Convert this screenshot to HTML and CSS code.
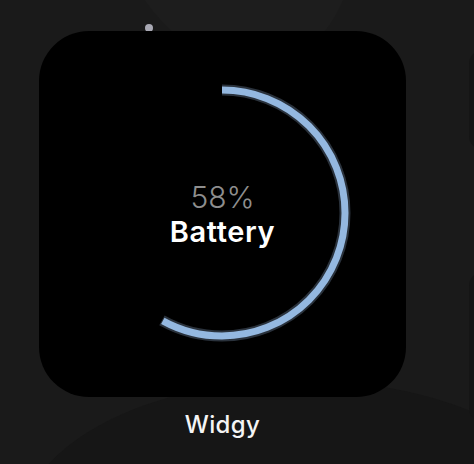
FILE: index.html
```html
<!DOCTYPE html>
<html>
<head>
<meta charset="utf-8">
<link rel="stylesheet" href="styles.css">
</head>
<body>
<div class="wall">
  <div class="blob blob-top"></div>
  <div class="blob blob-bottom"></div>
  <div class="edge edge-a"></div>
  <div class="edge edge-b"></div>
  <div class="dot"></div>
  <div class="home">
    <div class="app">
      <div class="widget">
        <svg class="ring" width="367" height="366" viewBox="0 0 367 366">
          <circle cx="183" cy="182" r="123" fill="none" stroke="#2a323c" stroke-width="11" stroke-dasharray="449 1000" transform="rotate(-90 183 182)"/>
          <circle cx="183" cy="182" r="123" fill="none" stroke="#94b8e0" stroke-width="7" stroke-dasharray="448 1000" transform="rotate(-90 183 182)"/>
        </svg>
        <div class="readout">
          <div class="pct">58%</div>
          <div class="name">Battery</div>
        </div>
      </div>
      <div class="label">Widgy</div>
    </div>
  </div>
</div>
</body>
</html>
```

FILE: styles.css
```css
* { box-sizing: border-box; }
html, body { margin: 0; padding: 0; }
body {
  width: 474px;
  height: 464px;
  overflow: hidden;
  background: #1a1a1a;
  font-family: Inter, "Noto Sans", sans-serif;
}
.wall {
  position: relative;
  width: 474px;
  height: 464px;
  overflow: hidden;
}
.blob {
  position: absolute;
  border-radius: 50%;
}
.blob-top {
  left: 110px;
  top: -260px;
  width: 240px;
  height: 330px;
  background: #1d1d1d;
  transform: rotate(-18deg);
}
.blob-bottom {
  left: 20px;
  top: 380px;
  width: 560px;
  height: 300px;
  background: #161616;
}
.edge {
  position: absolute;
  left: 469px;
  width: 40px;
  background: #151515;
  border-radius: 14px;
}
.edge-a { top: 50px; height: 100px; }
.edge-b { top: 272px; height: 150px; }
.dot {
  position: absolute;
  left: 145px;
  top: 24px;
  width: 8px;
  height: 8px;
  border-radius: 50%;
  background: #a9a9b4;
}
.home {
  position: relative;
  padding: 31px 0 0 39px;
}
.app {
  width: 367px;
  display: flex;
  flex-direction: column;
  align-items: center;
}
.widget {
  width: 367px;
  height: 366px;
  border-radius: 50px;
  background: #000;
  display: grid;
  place-items: center;
}
.ring, .readout {
  grid-area: 1 / 1;
}
.readout {
  display: flex;
  flex-direction: column;
  align-items: center;
  margin-top: 0;
}
.pct {
  color: #8e8e8e;
  font-size: 30px;
  font-weight: 300;
  line-height: 36px;
}
.name {
  color: #ffffff;
  font-size: 29px;
  font-weight: 600;
  line-height: 34px;
  letter-spacing: 0.6px;
}
.label {
  margin-top: 13px;
  color: #f4f4f4;
  font-size: 24px;
  font-weight: 500;
  line-height: 30px;
  letter-spacing: 0.4px;
}
```
